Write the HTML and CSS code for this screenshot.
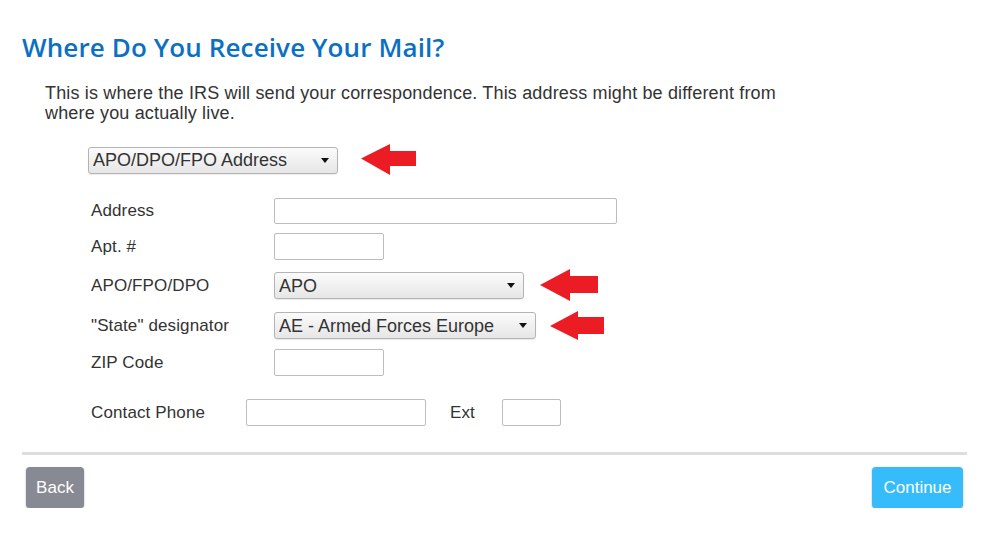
FILE: index.html
```html
<!DOCTYPE html>
<html lang="en">
<head>
<meta charset="utf-8">
<title>Where Do You Receive Your Mail?</title>
<link rel="stylesheet" href="styles.css">
</head>
<body>
<main class="page">
  <h1 class="title">Where Do You Receive Your Mail?</h1>
  <p class="intro">This is where the IRS will send your correspondence. This address might be different from<br>where you actually live.</p>

  <div class="type-row">
    <span class="select-wrap type-select">
      <select class="select"><option>APO/DPO/FPO Address</option></select>
    </span>
    <svg class="arrow arrow-a" width="56" height="32" viewBox="0 0 56 32"><polygon points="0,14.5 29,0 29,7 55,7 55,22 29,22 29,31" fill="#ec1c24"/></svg>
  </div>

  <div class="form">
    <div class="row row-address">
      <label class="label">Address</label>
      <input class="input w-address" type="text">
    </div>
    <div class="row row-apt">
      <label class="label">Apt. #</label>
      <input class="input w-short" type="text">
    </div>
    <div class="row row-apo">
      <label class="label">APO/FPO/DPO</label>
      <span class="select-wrap w-apo">
        <select class="select"><option>APO</option></select>
      </span>
      <svg class="arrow arrow-b" width="59" height="33" viewBox="0 0 59 33"><polygon points="0,16 30,0 30,7 58,7 58,24 30,24 30,32" fill="#ec1c24"/></svg>
    </div>
    <div class="row row-state">
      <label class="label">"State" designator</label>
      <span class="select-wrap w-state">
        <select class="select"><option>AE - Armed Forces Europe</option></select>
      </span>
      <svg class="arrow arrow-c" width="55" height="30" viewBox="0 0 55 30"><polygon points="0,15 28,0 28,6 54,6 54,23 28,23 28,29" fill="#ec1c24"/></svg>
    </div>
    <div class="row row-zip">
      <label class="label">ZIP Code</label>
      <input class="input w-short" type="text">
    </div>
    <div class="row row-phone">
      <label class="label label-phone">Contact Phone</label>
      <input class="input w-phone" type="text">
      <label class="label label-ext">Ext</label>
      <input class="input w-ext" type="text">
    </div>
  </div>

  <hr class="divider">

  <div class="actions">
    <button class="btn btn-back" type="button">Back</button>
    <button class="btn btn-continue" type="button">Continue</button>
  </div>
</main>
</body>
</html>
```

FILE: styles.css
```css
* { box-sizing: border-box; }

html, body {
  margin: 0;
  padding: 0;
  background: #ffffff;
}

body {
  font-family: "Liberation Sans", Arial, sans-serif;
  color: #333333;
}

.page {
  width: 945px;
  margin-left: 22px;
  padding-top: 31px;
}

.title {
  margin: 0;
  font-family: "Open Sans", "Liberation Sans", sans-serif;
  font-weight: 600;
  font-size: 26px;
  line-height: 32px;
  color: #0b70c2;
  letter-spacing: 0.12px;
}

.intro {
  margin: 20px 0 0 23px;
  font-size: 18px;
  line-height: 20px;
  letter-spacing: 0.16px;
  color: #333333;
}

.type-row {
  display: flex;
  align-items: center;
  margin: 21px 0 0 66px;
  height: 32px;
}

.type-select {
  width: 250px;
}

.select-wrap {
  position: relative;
  display: inline-block;
  height: 27px;
}

.select-wrap::after {
  content: "";
  position: absolute;
  right: 9px;
  top: 11px;
  border-left: 4px solid transparent;
  border-right: 4px solid transparent;
  border-top: 5px solid #111111;
  pointer-events: none;
}

.select {
  appearance: none;
  -webkit-appearance: none;
  width: 100%;
  height: 100%;
  margin: 0;
  padding: 0 24px 0 4px;
  border: 1px solid #b4b4b4;
  border-radius: 3px;
  background: linear-gradient(#fbfbfb, #e6e6e6);
  font-family: "Liberation Sans", Arial, sans-serif;
  font-size: 18px;
  color: #333333;
  box-shadow: 0 1px 1px rgba(0,0,0,0.08);
}

.arrow {
  display: block;
  flex: none;
}

.arrow-a { margin-left: 23px; }
.arrow-b { margin-left: 16px; }
.arrow-c { margin-left: 14px; }

.form {
  margin-left: 69px;
  margin-top: 22px;
}

.row {
  display: flex;
  align-items: center;
  height: 27px;
}

.row-address { height: 26px; }
.row-apt { margin-top: 9px; }
.row-apo { margin-top: 12px; }
.row-state { margin-top: 13px; }
.row-zip { margin-top: 10px; }
.row-phone { margin-top: 23px; }

.label {
  width: 183px;
  flex: none;
  font-size: 17px;
  letter-spacing: 0.12px;
  color: #333333;
}

.label-phone { width: 155px; }
.label-ext { width: 52px; margin-left: 24px; }

.input {
  height: 27px;
  margin: 0;
  padding: 0 4px;
  border: 1px solid #bdbdbd;
  border-radius: 2px;
  background: #ffffff;
  font-family: "Liberation Sans", Arial, sans-serif;
  font-size: 17px;
  flex: none;
}

.w-address { width: 343px; height: 26px; }
.w-short { width: 110px; }
.w-apo { width: 250px; }
.w-state { width: 262px; }
.w-phone { width: 180px; }
.w-ext { width: 59px; }

.divider {
  margin: 26px 0 0 0;
  height: 3px;
  border: 0;
  background: #dedede;
}

.actions {
  display: flex;
  justify-content: space-between;
  margin-top: 12px;
  padding: 0 4px 0 4px;
}

.btn {
  height: 41px;
  border: 0;
  border-radius: 4px;
  font-family: "Liberation Sans", Arial, sans-serif;
  font-size: 17px;
  color: #ffffff;
  box-shadow: 0 1px 2px rgba(0,0,0,0.35);
}

.btn-back {
  width: 58px;
  background: #878a93;
}

.btn-continue {
  width: 91px;
  background: #36bcfb;
}
```
